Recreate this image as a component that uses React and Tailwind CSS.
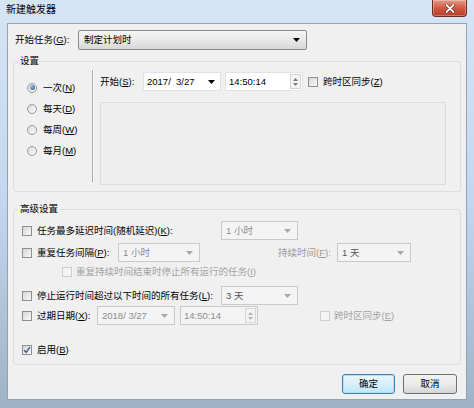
import React from 'react';

const FONT = "font-['Liberation_Sans','Noto_Sans_CJK_SC',sans-serif]";

// small win7-ish controls
const Check = ({ checked, disabled }) => (
  <span
    className={`flex h-[10px] w-[10px] shrink-0 items-center justify-center border ${
      disabled ? 'border-[#cdcdcd] bg-[#f7f7f7]' : 'border-[#8e8f8f] bg-white'
    }`}
  >
    <span
      className={`flex h-[8px] w-[8px] items-center justify-center ${
        disabled ? 'bg-[#f4f4f4]' : 'bg-gradient-to-br from-[#d6d6d6] to-[#fafafa]'
      }`}
    >
      {checked && (
        <svg width="8" height="8" viewBox="0 0 8 8">
          <path d="M1.2 4.2 L3.2 6.3 L6.9 1.2" fill="none" stroke="#3c5591" strokeWidth="1.4" />
        </svg>
      )}
    </span>
  </span>
);

const Radio = ({ checked }) => (
  <span className="flex h-[10px] w-[10px] shrink-0 items-center justify-center rounded-full border border-[#9a9a9a] bg-gradient-to-br from-[#d9d9d9] to-[#fdfdfd]">
    {checked && (
      <span className="h-[5px] w-[5px] rounded-full bg-[radial-gradient(circle_at_35%_35%,#8fc0ea,#22528a)]" />
    )}
  </span>
);

const Arrow = ({ color = '#000' }) => (
  <svg width="7" height="4" viewBox="0 0 7 4" className="shrink-0">
    <path d="M0 0 H7 L3.5 4 Z" fill={color} />
  </svg>
);

const Combo = ({ text, w, textColor = 'text-[#8d8d8d]', arrow = '#a8a8a8' }) => (
  <div
    className={`flex h-[19px] items-center justify-between border border-[#c9c9c9] bg-[#f4f4f4] pl-[4px] pr-[6px] ${w}`}
  >
    <span className={textColor}>{text}</span>
    <Arrow color={arrow} />
  </div>
);

const Spin = ({ dim }) => (
  <div
    className={`flex h-[15px] w-[11px] flex-col items-center justify-center gap-[2px] border ${
      dim ? 'border-[#d6d6d6]' : 'border-[#cfd5dc]'
    } bg-[#f3f3f3]`}
  >
    <svg width="5" height="3" viewBox="0 0 5 3">
      <path d="M0 3 L2.5 0 L5 3 Z" fill={dim ? '#b5b5b5' : '#7d7d7d'} />
    </svg>
    <svg width="5" height="3" viewBox="0 0 5 3">
      <path d="M0 0 H5 L2.5 3 Z" fill={dim ? '#b5b5b5' : '#7d7d7d'} />
    </svg>
  </div>
);

const U = ({ children }) => <span className="underline underline-offset-1">{children}</span>;

export default function App() {
  return (
    <div
      className={`${FONT} flex h-[408px] w-[474px] flex-col bg-gradient-to-b from-[#d6e5f5] via-[#c2d7ee] to-[#9fb2c6] text-[9.5px] leading-[12px] text-black`}
    >
      {/* title bar */}
      <div className="flex h-[23px] items-start justify-between">
        <span className="pl-[6px] pt-[4px] text-[10px]">新建触发器</span>
        <div className="mr-[7px] flex h-[17px] w-[35px] items-center justify-center rounded-b-[4px] border border-t-0 border-[#6e2a21] bg-gradient-to-b from-[#e39a88] via-[#cf5a43] to-[#b93a25] shadow-[inset_0_0_0_1px_rgba(255,255,255,0.3)]">
          <svg width="10" height="9" viewBox="0 0 10 9">
            <path d="M1.5 1 L8.5 8 M8.5 1 L1.5 8" stroke="#4a1a12" strokeWidth="3" strokeLinecap="round" />
            <path d="M1.5 1 L8.5 8 M8.5 1 L1.5 8" stroke="#ffffff" strokeWidth="1.8" strokeLinecap="round" />
          </svg>
        </div>
      </div>

      <div className="flex px-[7px]">
        {/* client area */}
        <div className="flex h-[377px] w-[460px] flex-col border border-[#8fa2b8] bg-[#f0f0f0]">
          {/* start task */}
          <div className="mt-[6px] flex items-center pl-[7px]">
            <span className="w-[63px]">
              开始任务(<U>G</U>):
            </span>
            <div className="flex h-[20px] w-[229px] items-center justify-between rounded-[2px] border border-[#8a8a8a] bg-gradient-to-b from-[#f6f6f6] via-[#e9e9e9] to-[#d7d7d7] pl-[5px] pr-[6px]">
              <span>制定计划时</span>
              <Arrow />
            </div>
          </div>

          {/* settings group */}
          <fieldset className="mx-[5px] mt-[5px] h-[137px] rounded-[3px] border border-[#d5dfe5]">
            <legend className="ml-[4px] px-[2px] leading-[12px]">设置</legend>
            <div className="flex h-full">
              <div className="flex w-[78px] flex-col pl-[13px] pt-[10px]">
                {[
                  ['一次', 'N', true],
                  ['每天', 'D', false],
                  ['每周', 'W', false],
                  ['每月', 'M', false],
                ].map(([t, k, c]) => (
                  <div key={k} className="flex h-[21px] items-center gap-[6px]">
                    <Radio checked={c} />
                    <span>
                      {t}(<U>{k}</U>)
                    </span>
                  </div>
                ))}
              </div>
              <div className="mb-[3px] mt-[3px] w-[2px] border-l border-r border-l-[#a9a9a9] border-r-white" />
              <div className="flex flex-col pl-[6px] pt-[5px]">
                <div className="flex h-[19px] items-center">
                  <span className="w-[43px]">
                    开始(<U>S</U>):
                  </span>
                  <div className="flex h-[19px] w-[78px] items-center justify-between border border-[#e3e3e3] bg-white pl-[3px] pr-[5px]">
                    <span>2017/&nbsp;&nbsp;3/27</span>
                    <Arrow />
                  </div>
                  <div className="ml-[4px] flex h-[19px] w-[78px] items-center justify-between border border-[#e3e3e3] bg-white pl-[3px] pr-[1px]">
                    <span>14:50:14</span>
                    <Spin />
                  </div>
                  <div className="ml-[5px] flex items-center gap-[5px]">
                    <Check />
                    <span>
                      跨时区同步(<U>Z</U>)
                    </span>
                  </div>
                </div>
                <div className="mt-[11px] h-[83px] w-[346px] border border-[#dcdcdc] bg-[#eeeeee]" />
              </div>
            </div>
          </fieldset>

          {/* advanced group */}
          <fieldset className="mx-[5px] mt-[11px] h-[162px] rounded-[3px] border border-[#d5dfe5]">
            <legend className="ml-[4px] px-[2px] leading-[12px]">高级设置</legend>
            <div className="flex flex-col pl-[8px] pt-[6px]">
              <div className="flex h-[19px] items-center">
                <Check />
                <span className="ml-[5px] w-[184px]">
                  任务最多延迟时间(随机延迟)(<U>K</U>):
                </span>
                <Combo text="1 小时" w="w-[77px]" />
              </div>

              <div className="mt-[3px] flex h-[19px] items-center">
                <Check />
                <span className="ml-[5px] w-[81px]">
                  重复任务间隔(<U>P</U>):
                </span>
                <Combo text="1 小时" w="w-[82px]" />
                <span className="ml-[78px] w-[59px] text-[#9a9a9a]">
                  持续时间(<U>F</U>):
                </span>
                <Combo text="1 天" w="w-[74px]" textColor="text-[#555]" />
              </div>

              <div className="mt-[2px] flex h-[16px] items-center pl-[40px]">
                <Check disabled />
                <span className="ml-[4px] text-[#a3a3a3]">
                  重复持续时间结束时停止所有运行的任务(<U>I</U>)
                </span>
              </div>

              <div className="mt-[6px] flex h-[19px] items-center">
                <Check />
                <span className="ml-[5px] w-[184px]">
                  停止运行时间超过以下时间的所有任务(<U>L</U>):
                </span>
                <Combo text="3 天" w="w-[77px]" textColor="text-[#555]" />
              </div>

              <div className="mt-[1px] flex h-[19px] items-center">
                <Check />
                <span className="ml-[5px] w-[60px]">
                  过期日期(<U>X</U>):
                </span>
                <Combo text="2018/  3/27" w="w-[78px]" />
                <div className="ml-[5px] flex h-[19px] w-[78px] items-center justify-between border border-[#c9c9c9] bg-[#f4f4f4] pl-[3px] pr-[1px]">
                  <span className="text-[#8d8d8d]">14:50:14</span>
                  <Spin dim />
                </div>
                <div className="ml-[62px] flex items-center gap-[4px]">
                  <Check disabled />
                  <span className="text-[#a3a3a3]">
                    跨时区同步(<U>E</U>)
                  </span>
                </div>
              </div>

              <div className="mt-[17px] flex h-[16px] items-center">
                <Check checked />
                <span className="ml-[5px]">
                  启用(<U>B</U>)
                </span>
              </div>
            </div>
          </fieldset>

          {/* buttons */}
          <div className="mt-[9px] flex justify-end gap-[8px] pr-[9px]">
            <button className="flex h-[20px] w-[53px] items-center justify-center rounded-[3px] border border-[#3c7fb1] bg-gradient-to-b from-[#eaf6fd] via-[#d9f0fc] to-[#bee6fd] shadow-[inset_0_0_0_1px_#b5e2fa]">
              确定
            </button>
            <button className="flex h-[20px] w-[54px] items-center justify-center rounded-[3px] border border-[#707070] bg-gradient-to-b from-[#f2f2f2] via-[#ebebeb] to-[#d5d5d5]">
              取消
            </button>
          </div>
        </div>
      </div>
    </div>
  );
}
